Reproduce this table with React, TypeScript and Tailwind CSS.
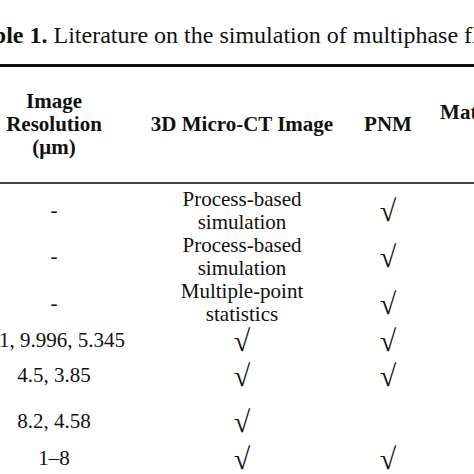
const cols = "grid grid-cols-[174px_202px_90px_139px_1fr]";

type Row = {
  res: string;
  ct: string[] | null;
  pnm: boolean;
  h: string;
};

const rows: Row[] = [
  { res: "-", ct: ["Process-based", "simulation"], pnm: true, h: "h-[46px]" },
  { res: "-", ct: ["Process-based", "simulation"], pnm: true, h: "h-[46px]" },
  { res: "-", ct: ["Multiple-point", "statistics"], pnm: true, h: "h-[47px]" },
  { res: "2.1, 9.996, 5.345", ct: null, pnm: true, h: "h-[26px]" },
  { res: "4.5, 3.85", ct: null, pnm: true, h: "h-[46px]" },
  { res: "8.2, 4.58", ct: null, pnm: false, h: "h-[46px]" },
  { res: "1–8", ct: null, pnm: true, h: "h-[26px]" },
];

function Check() {
  return <span className="inline-block translate-y-[2px] text-[30px] leading-[23px]">√</span>;
}

export default function App() {
  return (
    <div className="h-[474px] w-[474px] overflow-hidden bg-white text-[#111] font-['Liberation_Serif',serif]">
      <div className="ml-[-33px] w-[820px]">
        {/* Caption */}
        <p className="whitespace-nowrap pt-[21px] text-[24px] leading-[28px]">
          <span className="font-bold">Table 1.</span> Literature on the simulation of multiphase flow in porous media
        </p>

        <div className="mt-[15px] h-[2.5px] w-full bg-[#111]" />

        {/* Header */}
        <div className={`${cols} h-[115.5px] items-center text-center text-[21px] font-bold leading-[23px]`}>
          <div>
            Image
            <br />
            Resolution
            <br />
            (μm)
          </div>
          <div className="whitespace-nowrap">3D Micro-CT Image</div>
          <div>PNM</div>
          <div className="whitespace-nowrap">
            Mathematical
            <br />
            Model
          </div>
          <div />
        </div>

        <div className="h-[1.5px] w-full bg-[#444]" />

        {/* Body */}
        <div className="pt-[4px] text-[21px] leading-[23px]">
          {rows.map((r, i) => (
            <div key={i} className={`${cols} ${r.h} items-center text-center`}>
              <div className="whitespace-nowrap">{r.res}</div>
              <div className="whitespace-nowrap">
                {r.ct ? r.ct.map((line, j) => <div key={j}>{line}</div>) : <Check />}
              </div>
              <div>{r.pnm ? <Check /> : null}</div>
              <div />
              <div />
            </div>
          ))}
        </div>
      </div>
    </div>
  );
}
